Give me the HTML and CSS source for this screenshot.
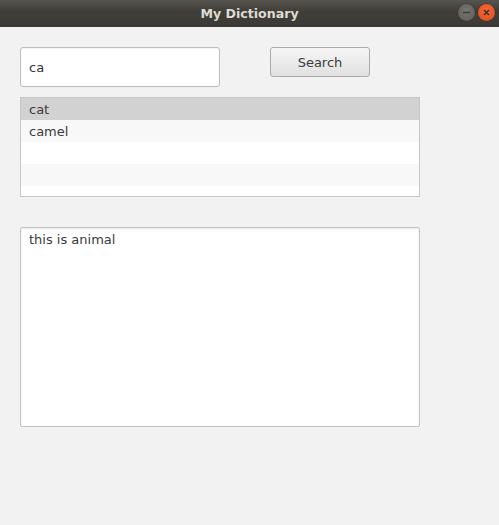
FILE: index.html
```html
<!DOCTYPE html>
<html>
<head>
<meta charset="utf-8">
<title>My Dictionary</title>
<link rel="stylesheet" href="styles.css">
</head>
<body>
<div class="window">
  <header class="titlebar">
    <span class="title">My Dictionary</span>
    <div class="controls">
      <span class="ctl min"><svg width="17" height="17" viewBox="0 0 17 17"><line x1="5" y1="8.5" x2="12" y2="8.5" stroke="#3a3935" stroke-width="1.4"/></svg></span>
      <span class="ctl close"><svg width="17" height="17" viewBox="0 0 17 17"><path d="M6 6 L11 11 M11 6 L6 11" stroke="#3a2a22" stroke-width="1.4"/></svg></span>
    </div>
  </header>
  <main class="content">
    <div class="toprow">
      <div class="field">ca</div>
      <button class="btn">Search</button>
    </div>
    <div class="list">
      <div class="row selected">cat</div>
      <div class="row odd">camel</div>
      <div class="row"></div>
      <div class="row odd"></div>
      <div class="row"></div>
    </div>
    <div class="textarea">this is animal</div>
  </main>
</div>
</body>
</html>
```

FILE: styles.css
```css
html, body {
  margin: 0;
  padding: 0;
}
body {
  background: #f2f2f2;
  font-family: "DejaVu Sans", sans-serif;
  font-size: 13px;
  color: #3b3b3b;
  width: 499px;
  height: 525px;
  overflow: hidden;
}
.titlebar {
  height: 27px;
  background: linear-gradient(#57544e, #403e39 40%, #3b3a36);
  position: relative;
  display: flex;
  align-items: center;
  justify-content: center;
}
.title {
  color: #dfdbd2;
  font-weight: bold;
  font-size: 12.6px;
  line-height: 27px;
}
.controls {
  position: absolute;
  right: 4px;
  top: 4px;
  display: flex;
  gap: 3px;
}
.ctl {
  width: 17px;
  height: 17px;
  border-radius: 50%;
  display: block;
}
.ctl svg { display: block; }
.min {
  background: radial-gradient(circle at 50% 40%, #77756f, #5c5b56);
  box-shadow: 0 0 0 0.5px #2e2d2a;
}
.close {
  background: radial-gradient(circle at 50% 40%, #f26a3a, #df4b19);
  box-shadow: 0 0 0 0.5px #3a2a22;
}
.content {
  padding: 20px 20px 0 20px;
  display: flex;
  flex-direction: column;
}
.toprow {
  display: flex;
  align-items: flex-start;
  gap: 50px;
}
.field {
  box-sizing: border-box;
  width: 200px;
  height: 40px;
  background: #fff;
  border: 1px solid #bdbdbd;
  border-radius: 3px;
  box-shadow: inset 0 1px 1px rgba(0,0,0,0.05);
  padding: 1px 0 0 8px;
  line-height: 37px;
  font-size: 13px;
  color: #333;
}
.btn {
  box-sizing: border-box;
  width: 100px;
  height: 30px;
  margin: 0;
  border: 1px solid #acacac;
  border-radius: 3px;
  background: linear-gradient(#f6f6f6, #e0e0e0);
  font-family: "DejaVu Sans", sans-serif;
  font-size: 13px;
  color: #3b3b3b;
  padding: 2px 0 0 0;
  line-height: 26px;
}
.list {
  box-sizing: border-box;
  margin-top: 10px;
  width: 400px;
  height: 100px;
  background: #fff;
  border: 1px solid #c6c6c6;
  overflow: hidden;
}
.row {
  box-sizing: border-box;
  height: 22px;
  line-height: 21px;
  padding: 1px 0 0 8px;
  background: #fff;
}
.row.odd { background: #f8f8f8; }
.row.selected { background: #d2d2d2; }
.textarea {
  box-sizing: border-box;
  margin-top: 30px;
  width: 400px;
  height: 200px;
  background: #fff;
  border: 1px solid #c4c4c4;
  border-radius: 2px;
  box-shadow: inset 0 1px 2px rgba(0,0,0,0.08);
  padding: 2px 8px;
  line-height: 19px;
}
```
